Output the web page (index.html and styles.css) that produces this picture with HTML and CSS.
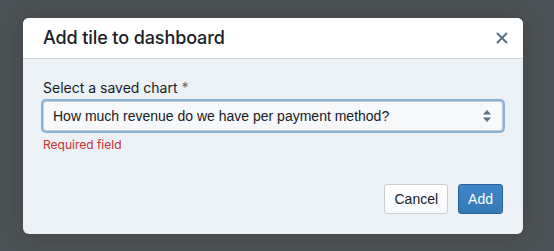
FILE: index.html
```html
<!DOCTYPE html>
<html lang="en">

<head>
    <meta charset="UTF-8">
    <meta name="viewport" content="width=device-width, initial-scale=1.0">
    <title>Add tile to dashboard</title>
    <link rel="stylesheet" href="styles.css">
</head>

<body>
    <div class="dialog">
        <header class="dialog-header">
            <h1>Add tile to dashboard</h1>
            <span class="close">
                <svg width="12" height="12" viewBox="0 0 12 12">
                    <path d="M1.5 1.5 L10.5 10.5 M10.5 1.5 L1.5 10.5" stroke="#5c7080" stroke-width="2" stroke-linecap="round" fill="none"/>
                </svg>
            </span>
        </header>
        <main class="dialog-body">
            <label class="label">Select a saved chart <span class="star">*</span></label>
            <div class="select">
                <span>How much revenue do we have per payment method?</span>
                <svg width="10" height="14" viewBox="0 0 10 14">
                    <path d="M5 1 L9 5.5 H1 Z M5 13 L9 8.5 H1 Z" fill="#5c7080"/>
                </svg>
            </div>
            <p class="error">Required field</p>
        </main>
        <footer class="dialog-footer">
            <button class="btn">Cancel</button>
            <button class="btn primary">Add</button>
        </footer>
    </div>
</body>

</html>
```

FILE: styles.css
```css
* {
    margin: 0;
    padding: 0;
    box-sizing: border-box;
}

body {
    width: 554px;
    height: 251px;
    overflow: hidden;
    padding: 18px 0 0 23px;
    background-color: #4d5256;
    font-family: Inter, "Liberation Sans", sans-serif;
    color: #182026;
}

.dialog {
    width: 500px;
    height: 216px;
    display: flex;
    flex-direction: column;
    background-color: #ebf1f5;
    border-radius: 6px;
    box-shadow: 0 0 24px rgba(0, 0, 0, .18);
}

.dialog-header {
    height: 41px;
    display: flex;
    align-items: center;
    justify-content: space-between;
    padding: 0 15px 1px 20px;
    background-color: white;
    border-bottom: 1px solid #d3d8de;
    border-radius: 6px 6px 0 0;
}

.dialog-header h1 {
    font-size: 18px;
    font-weight: 500;
    letter-spacing: -.1px;
}

.close {
    display: flex;
    width: 12px;
    height: 12px;
    margin-top: 1px;
}

.dialog-body {
    flex: 1;
    padding: 20px 20px 0;
}

.label {
    display: block;
    font-size: 14px;
    line-height: 18px;
    margin-bottom: 4px;
}

.star {
    color: #5c7080;
}

.select {
    height: 30px;
    display: flex;
    align-items: center;
    justify-content: space-between;
    padding: 0 10px 0 9px;
    background-color: #f6f8fa;
    border: 1px solid #c5ccd3;
    border-radius: 3px;
    box-shadow: 0 0 0 2px #86b1d9;
    font-family: "Liberation Sans", Arial, sans-serif;
    font-size: 14px;
}

.error {
    margin-top: 6px;
    font-size: 12px;
    line-height: 16px;
    color: #c23030;
}

.dialog-footer {
    display: flex;
    justify-content: flex-end;
    gap: 10px;
    padding: 0 20px 20px;
}

.btn {
    height: 30px;
    padding: 0 9px;
    font-family: "Liberation Sans", Arial, sans-serif;
    font-size: 14px;
    color: #182026;
    background: linear-gradient(#fff, #f5f8fa);
    border: 1px solid #c9cfd4;
    border-radius: 3px;
}

.primary {
    color: white;
    background: linear-gradient(#3f86c6, #3579b7);
    border-color: #2b6299;
}
```
